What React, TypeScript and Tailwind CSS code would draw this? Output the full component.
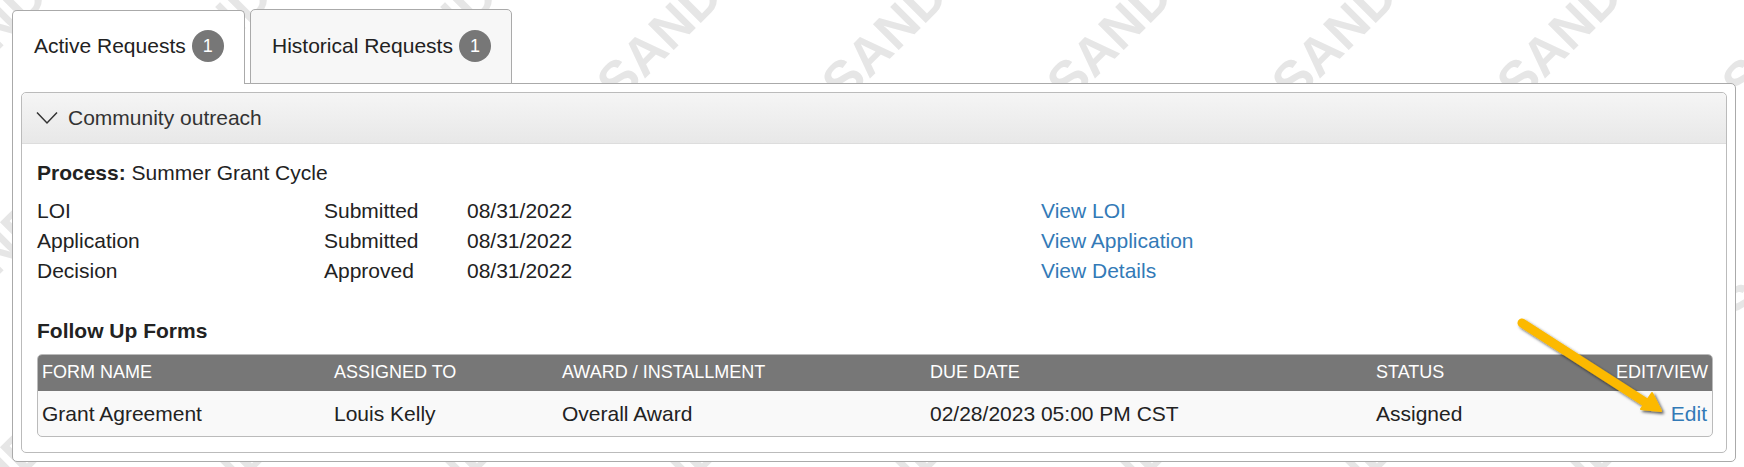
import React from 'react';

const STAGES = [
    { name: 'LOI', status: 'Submitted', date: '08/31/2022', link: 'View LOI' },
    { name: 'Application', status: 'Submitted', date: '08/31/2022', link: 'View Application' },
    { name: 'Decision', status: 'Approved', date: '08/31/2022', link: 'View Details' },
];

const TILE_COUNT = 27;

// middle tiles of the second row sit fully behind the panel
function isHidden(i: number) {
    return i > 9 && i < 17;
}

function Watermark() {
    return (
        <div className="absolute left-[-77px] top-[-135px] grid w-[2025px] grid-cols-[repeat(9,225px)] auto-rows-[225px]">
            {Array.from({ length: TILE_COUNT }).map((_, i) => (
                <div key={i} className="relative overflow-hidden">
                    {!isHidden(i) && (
                        <span className="absolute left-[8px] top-[200px] origin-left -rotate-45 select-none text-[53px] font-bold leading-none text-[#e6e6e6]">
                            SANDBOX
                        </span>
                    )}
                </div>
            ))}
        </div>
    );
}

function Tab({ label, active }: { label: string; active?: boolean }) {
    return (
        <div
            className={
                active
                    ? 'relative z-10 -mb-px flex h-[74px] w-[233px] items-center rounded-t-[5px] border border-b-0 border-[#aaaaaa] bg-white pb-[3px] pl-[21px]'
                    : 'relative z-10 -mb-px ml-[5px] flex h-[75px] w-[262px] items-center rounded-t-[5px] border border-[#aaaaaa] bg-[#f7f7f7] pb-[2px] pl-[21px]'
            }
        >
            <span>{label}</span>
            <span className="ml-[6px] flex h-[32px] w-[32px] items-center justify-center rounded-full bg-[#777777] text-[18px] text-white">1</span>
        </div>
    );
}

export default function App() {
    return (
        <div className="relative h-[467px] w-[1744px] overflow-hidden bg-white font-['Liberation_Sans',Arial,sans-serif] text-[21px] leading-[30px] text-[#222222]">
            <Watermark />
            <div className="relative pl-[12px] pr-[8px] pt-[9px]">
                <div className="flex items-end">
                    <Tab label="Active Requests" active />
                    <Tab label="Historical Requests" />
                </div>
                <div className="h-[379px] rounded-b-[5px] rounded-tr-[5px] border border-[#aaaaaa] bg-white px-[8px] pt-[8px]">
                    <div className="h-[361px] rounded-[5px] border border-[#bbbbbb]">
                        <div className="flex h-[51px] items-center rounded-t-[5px] border-b border-[#dddddd] bg-gradient-to-b from-[#f5f5f5] to-[#e8e8e8] pb-px pl-[14px] text-[#333333]">
                            <svg width="22" height="14" viewBox="0 0 22 14" fill="none" stroke="#333333" strokeWidth="1.5">
                                <path d="M1 1.5 L11 12 L21 1.5" />
                            </svg>
                            <span className="ml-[10px]">Community outreach</span>
                        </div>
                        <div className="pl-[15px] pr-[14px] pt-[14px]">
                            <div>
                                <span className="font-bold">Process:</span> Summer Grant Cycle
                            </div>
                            <div className="mt-[8px]">
                                {STAGES.map((s) => (
                                    <div key={s.name} className="flex">
                                        <span className="w-[287px]">{s.name}</span>
                                        <span className="w-[143px]">{s.status}</span>
                                        <span className="w-[574px]">{s.date}</span>
                                        <a className="text-[#337ab7]">{s.link}</a>
                                    </div>
                                ))}
                            </div>
                            <div className="mt-[30px] font-bold">Follow Up Forms</div>
                            <div className="-mr-px mt-[8px] overflow-hidden rounded-[5px] border border-[#bbbbbb] bg-[#f9f9f9]">
                                <div className="flex h-[36px] items-center bg-[#777777] px-[4px] pb-[2px] text-[18px] text-white">
                                    <span className="w-[292px]">FORM NAME</span>
                                    <span className="w-[228px]">ASSIGNED TO</span>
                                    <span className="w-[368px]">AWARD / INSTALLMENT</span>
                                    <span className="w-[446px]">DUE DATE</span>
                                    <span>STATUS</span>
                                    <span className="ml-auto">EDIT/VIEW</span>
                                </div>
                                <div className="flex h-[45px] items-center pl-[4px] pr-[5px]">
                                    <span className="w-[292px]">Grant Agreement</span>
                                    <span className="w-[228px]">Louis Kelly</span>
                                    <span className="w-[368px]">Overall Award</span>
                                    <span className="w-[446px]">02/28/2023 05:00 PM CST</span>
                                    <span>Assigned</span>
                                    <a className="ml-auto text-[#337ab7]">Edit</a>
                                </div>
                            </div>
                        </div>
                    </div>
                </div>
            </div>
            {/* annotation arrow drawn on top of the screenshot */}
            <svg className="absolute left-0 top-0" width="1744" height="467" viewBox="0 0 1744 467">
                <defs>
                    <filter id="arrowShadow" x="-20%" y="-20%" width="140%" height="140%">
                        <feDropShadow dx="2" dy="2" stdDeviation="1.5" floodColor="#000000" floodOpacity="0.65" />
                    </filter>
                </defs>
                <g filter="url(#arrowShadow)">
                    <path d="M1522 323 L1648 404" stroke="#fcb900" strokeWidth="9" strokeLinecap="round" fill="none" />
                    <path d="M1661 411 L1641 409 L1652 393 Z" fill="#fcb900" stroke="#fcb900" strokeWidth="2" strokeLinejoin="round" />
                </g>
            </svg>
        </div>
    );
}
